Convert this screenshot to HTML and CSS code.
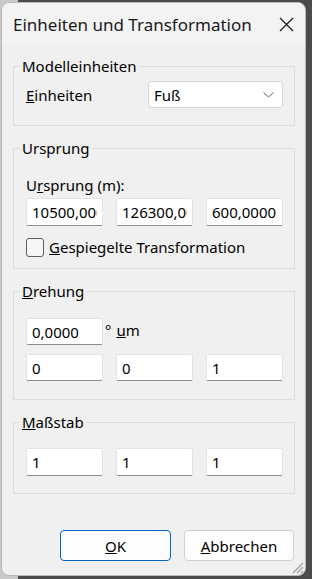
FILE: index.html
```html
<!DOCTYPE html>
<html lang="de">
<head>
  <meta charset="UTF-8">
  <meta name="viewport" content="width=device-width, initial-scale=1.0">
  <title>Einheiten und Transformation</title>
  <link rel="stylesheet" href="styles.css">
</head>
<body>

  <div class="window">
    <div class="titlebar">
      <span class="title">Einheiten und Transformation</span>
      <svg class="close" width="15" height="15" viewBox="0 0 15 15">
        <path d="M1 1 L14 14 M14 1 L1 14" stroke="#1a1a1a" stroke-width="1.2" fill="none"/>
      </svg>
    </div>

    <div class="content">
      <fieldset class="group g-units">
        <legend>Modelleinheiten</legend>
        <div class="units-row">
          <span class="label"><u>E</u>inheiten</span>
          <div class="combo">
            <span>Fuß</span>
            <svg class="chevron" width="11" height="6" viewBox="0 0 11 6">
              <path d="M0.5 0.5 L5.5 5 L10.5 0.5" stroke="#606060" stroke-width="1" fill="none"/>
            </svg>
          </div>
        </div>
      </fieldset>

      <fieldset class="group g-origin">
        <legend>Ursprung</legend>
        <div class="label">U<u>r</u>sprung (m):</div>
        <div class="fields">
          <input class="field" type="text" value="10500,0000">
          <input class="field" type="text" value="126300,0000">
          <input class="field" type="text" value="600,0000">
        </div>
        <label class="check-row">
          <span class="checkbox"></span>
          <span><u>G</u>espiegelte Transformation</span>
        </label>
      </fieldset>

      <fieldset class="group g-rotation">
        <legend><u>D</u>rehung</legend>
        <div class="angle-row">
          <input class="field short" type="text" value="0,0000">
          <span class="deg">°</span>
          <span><u>u</u>m</span>
        </div>
        <div class="fields">
          <input class="field short" type="text" value="0">
          <input class="field short" type="text" value="0">
          <input class="field short" type="text" value="1">
        </div>
      </fieldset>

      <fieldset class="group g-scale">
        <legend><u>M</u>aßstab</legend>
        <div class="fields">
          <input class="field" type="text" value="1">
          <input class="field" type="text" value="1">
          <input class="field" type="text" value="1">
        </div>
      </fieldset>

      <div class="buttons">
        <button class="btn btn-default"><u>O</u>K</button>
        <button class="btn"><u>A</u>bbrechen</button>
      </div>
    </div>

    <svg class="grip" width="14" height="14" viewBox="0 0 14 14">
      <path d="M13 3 L3 13 M13 7 L7 13 M13 11 L11 13" stroke="#a0a0a0" stroke-width="1.3" fill="none"/>
    </svg>
  </div>

</body>
</html>
```

FILE: styles.css
```css
:root {
  --window-bg: #f0f0f0;
  --title-bg: #f3f3f3;
  --group-line: #dcdcdc;
  --field-line: #e3e3e3;
  --field-bottom: #8c8c8c;
  --accent: #0067c0;
  --text: #000;
}

* {
  box-sizing: border-box;
}

body {
  margin: 0;
  height: 579px;
  overflow: hidden;
  background: linear-gradient(to right, #c9c9c9 0, #c9c9c9 18px, #4b4b4b 18px);
  font-family: 'Noto Sans', 'Open Sans', sans-serif;
  font-size: 15px;
  color: var(--text);
}

.window {
  position: relative;
  width: 305px;
  height: 574px;
  margin: 2px 0 0 1px;
  background-color: var(--window-bg);
  border: 1px solid #b8b8b8;
  border-radius: 8px;
  overflow: hidden;
}

.titlebar {
  display: flex;
  justify-content: space-between;
  align-items: center;
  height: 42px;
  padding: 0 11px 0 11px;
  background-color: var(--title-bg);
}

.title {
  font-size: 17px;
  color: #1a1a1a;
}

.content {
  padding: 11px 0 0 11px;
}

.group {
  width: 282px;
  margin: 0 0 12px 0;
  padding: 0 11px 0 12px;
  border: 1px solid var(--group-line);
  min-width: 0;
}

.group legend {
  margin-left: -6px;
  padding: 0 2px;
  line-height: 20px;
}

.label {
  line-height: 20px;
}

.units-row {
  display: flex;
  align-items: center;
  justify-content: space-between;
  padding: 5px 0 17px 0;
}

.combo {
  display: flex;
  align-items: center;
  justify-content: space-between;
  width: 135px;
  height: 27px;
  padding: 0 8px 0 5px;
  background-color: #fff;
  border: 1px solid #d5d5d5;
  border-radius: 3px;
}

.g-origin {
  padding-top: 17px;
  padding-bottom: 11px;
}

.g-origin .label {
  margin-bottom: 3px;
}

.fields {
  display: flex;
  gap: 13px;
}

.field {
  width: 77px;
  height: 28px;
  margin: 0;
  padding: 0 5px;
  font-family: inherit;
  font-size: 15px;
  color: var(--text);
  background-color: #fff;
  border: 1px solid var(--field-line);
  border-bottom-color: var(--field-bottom);
  border-radius: 2px;
  outline: none;
}

.field.short {
  height: 27px;
}

.check-row {
  display: flex;
  align-items: center;
  gap: 5px;
  margin-top: 11px;
}

.checkbox {
  width: 18px;
  height: 19px;
  background-color: #f6f6f6;
  border: 1px solid #5f5f5f;
  border-radius: 3px;
}

.g-rotation {
  padding-top: 17px;
  padding-bottom: 18px;
}

.angle-row {
  display: flex;
  align-items: flex-start;
  margin-bottom: 9px;
}

.deg {
  margin: 0 5px 0 2px;
  line-height: 20px;
}

.angle-row span {
  line-height: 24px;
}

.g-scale {
  padding-top: 16px;
  padding-bottom: 17px;
}

.buttons {
  display: flex;
  justify-content: flex-end;
  gap: 13px;
  width: 282px;
  padding-top: 24px;
  padding-right: 1px;
}

.btn {
  width: 110px;
  height: 31px;
  font-family: inherit;
  font-size: 15px;
  color: var(--text);
  background-color: #fdfdfd;
  border: 1px solid #d0d0d0;
  border-radius: 4px;
  padding: 0;
}

.btn-default {
  width: 111px;
  border-color: var(--accent);
}

.grip {
  position: absolute;
  right: 1px;
  bottom: 1px;
}
```
